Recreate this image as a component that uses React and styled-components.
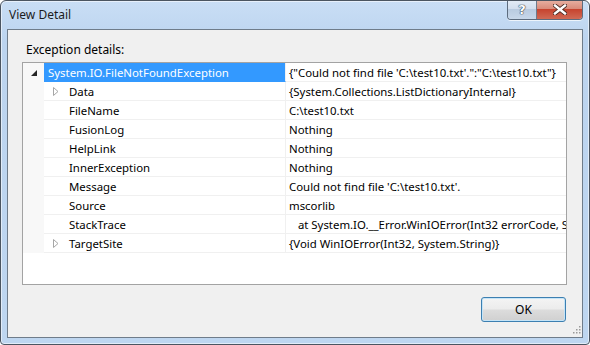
import React from "react";
import styled, { createGlobalStyle } from "styled-components";

const GlobalStyle = createGlobalStyle`
  html, body {
    margin: 0;
    padding: 0;
    background: #ffffff;
  }
  body {
    font-family: "Noto Sans", "Open Sans", sans-serif;
    font-size: 11.4px;
    color: #000;
  }
`;

const rows = [
  { name: "Data", value: "{System.Collections.ListDictionaryInternal}", expandable: true },
  { name: "FileName", value: "C:\\test10.txt" },
  { name: "FusionLog", value: "Nothing" },
  { name: "HelpLink", value: "Nothing" },
  { name: "InnerException", value: "Nothing" },
  { name: "Message", value: "Could not find file 'C:\\test10.txt'." },
  { name: "Source", value: "mscorlib" },
  {
    name: "StackTrace",
    value: "   at System.IO.__Error.WinIOError(Int32 errorCode, St",
  },
  { name: "TargetSite", value: "{Void WinIOError(Int32, System.String)}", expandable: true },
];

const App = () => {
  return (
    <>
      <GlobalStyle />
      <Window>
        <TitleBar>
          <Title>View Detail</Title>
          <Controls>
            <HelpButton>?</HelpButton>
            <CloseButton>
              <svg width="14" height="11" viewBox="0 0 14 11">
                <path
                  d="M2 1.5 L12 9.5 M12 1.5 L2 9.5"
                  stroke="#4a2a22"
                  strokeWidth="4.2"
                  strokeLinecap="square"
                />
                <path
                  d="M2 1.5 L12 9.5 M12 1.5 L2 9.5"
                  stroke="#ffffff"
                  strokeWidth="2.4"
                  strokeLinecap="square"
                />
              </svg>
            </CloseButton>
          </Controls>
        </TitleBar>
        <Client>
          <Label>Exception details:</Label>
          <Tree>
            <Row>
              <Gutter>
                <svg width="6" height="6" viewBox="0 0 6 6">
                  <polygon points="6,0 6,6 0,6" fill="#262626" />
                </svg>
              </Gutter>
              <NameCell $selected>System.IO.FileNotFoundException</NameCell>
              <ValueCell>{`{"Could not find file 'C:\\test10.txt'.":"C:\\test10.txt"}`}</ValueCell>
            </Row>
            {rows.map((r) => (
              <Row key={r.name}>
                <Gutter />
                <NameCell>
                  <Expander>
                    {r.expandable && (
                      <svg width="6" height="9" viewBox="0 0 6 9">
                        <polygon
                          points="0.5,0.5 5,4.5 0.5,8.5"
                          fill="#ffffff"
                          stroke="#a6a6a6"
                          strokeWidth="1"
                        />
                      </svg>
                    )}
                  </Expander>
                  {r.name}
                </NameCell>
                <ValueCell>{r.value}</ValueCell>
              </Row>
            ))}
          </Tree>
          <Footer>
            <OkButton>OK</OkButton>
          </Footer>
          <Grip>
            <svg width="10" height="10" viewBox="0 0 10 10">
              {[
                [8, 0],
                [8, 3],
                [5, 3],
                [8, 6],
                [5, 6],
                [2, 6],
              ].map(([x, y]) => (
                <rect key={`${x}-${y}`} x={x} y={y} width="1.5" height="1.5" fill="#9a9a9a" />
              ))}
            </svg>
          </Grip>
        </Client>
      </Window>
    </>
  );
};

const Window = styled.div`
  width: 590px;
  height: 345px;
  box-sizing: border-box;
  border: 1px solid #4b5561;
  border-radius: 6px 6px 4px 4px;
  background: linear-gradient(to bottom, #c9def5 0px, #bcd4ef 40px, #bed6f0 100%);
  box-shadow: inset 0 0 0 1px rgba(255, 255, 255, 0.55);
  display: flex;
  flex-direction: column;
  overflow: hidden;
`;

const TitleBar = styled.div`
  height: 28px;
  display: flex;
  align-items: flex-start;
  padding-left: 8px;
`;

const Title = styled.span`
  line-height: 28px;
  font-size: 12px;
  color: #1c1c1c;
`;

const Controls = styled.div`
  margin-left: auto;
  margin-right: 6px;
  margin-top: -1px;
  display: flex;
  border: 1px solid #5d6c7e;
  border-top: none;
  border-radius: 0 0 4px 4px;
  overflow: hidden;
  box-shadow: 0 1px 0 rgba(255, 255, 255, 0.7);
`;

const HelpButton = styled.div`
  width: 28px;
  height: 19px;
  display: flex;
  align-items: center;
  justify-content: center;
  border-right: 1px solid #6d7b8c;
  background: linear-gradient(to bottom, #e4ecf6 0%, #d3dfee 45%, #b9cbe0 50%, #c8d8ea 100%);
  color: #ffffff;
  font-family: "DejaVu Sans", sans-serif;
  font-weight: bold;
  font-size: 13px;
  text-shadow: 0 0 1px #2b3a4a, 0 0 1px #2b3a4a, 0 0 1px #2b3a4a;
`;

const CloseButton = styled.div`
  width: 45px;
  height: 19px;
  display: flex;
  align-items: center;
  justify-content: center;
  background: linear-gradient(to bottom, #e8b1a3 0%, #d98c7b 45%, #c7442f 50%, #d06a55 100%);
`;

const Client = styled.div`
  position: relative;
  flex: 1;
  margin: 0 6px 6px 6px;
  border: 1px solid #6f7c8a;
  background: #f0f0f0;
  display: flex;
  flex-direction: column;
  padding: 12px 15px 0 14px;
`;

const Label = styled.div`
  margin-left: 4px;
  height: 16px;
  line-height: 16px;
  margin-bottom: 4px;
  font-size: 12px;
`;

const Tree = styled.div`
  height: 223px;
  box-sizing: border-box;
  border: 1px solid #a3a3a3;
  background: #ffffff;
  overflow: hidden;
`;

const Row = styled.div`
  display: flex;
  height: 19px;
  white-space: nowrap;
`;

const Gutter = styled.div`
  width: 21px;
  flex: none;
  background: #f8f8f8;
  display: flex;
  align-items: center;
  padding-left: 8px;
  box-sizing: border-box;
`;

const NameCell = styled.div`
  width: 242px;
  flex: none;
  box-sizing: border-box;
  display: flex;
  align-items: center;
  padding-left: ${(p) => (p.$selected ? "4px" : "9px")};
  background: ${(p) => (p.$selected ? "#3399ff" : "#ffffff")};
  color: ${(p) => (p.$selected ? "#ffffff" : "#000000")};
  border-bottom: 1px solid ${(p) => (p.$selected ? "#3399ff" : "#f0f0f0")};
  border-right: 1px solid #f0f0f0;
`;

const Expander = styled.span`
  width: 16px;
  flex: none;
  display: flex;
  align-items: center;
`;

const ValueCell = styled.div`
  flex: 1;
  min-width: 0;
  overflow: hidden;
  white-space: pre;
  display: flex;
  align-items: center;
  padding-left: 3px;
  border-bottom: 1px solid #f0f0f0;
`;

const Footer = styled.div`
  display: flex;
  justify-content: flex-end;
  padding-top: 12px;
  padding-right: 1px;
`;

const OkButton = styled.button`
  width: 85px;
  height: 25px;
  font-family: "Noto Sans", "Open Sans", sans-serif;
  font-size: 12px;
  color: #000;
  border: 1px solid #3c7fb1;
  border-radius: 3px;
  background: linear-gradient(to bottom, #f4f4f4 0%, #ececec 48%, #dcdcdc 52%, #d0d0d0 100%);
  box-shadow: inset 0 0 0 1px #c5e4f7;
  padding: 0;
`;

const Grip = styled.div`
  position: absolute;
  right: 1px;
  bottom: 1px;
  line-height: 0;
`;

export default App;
